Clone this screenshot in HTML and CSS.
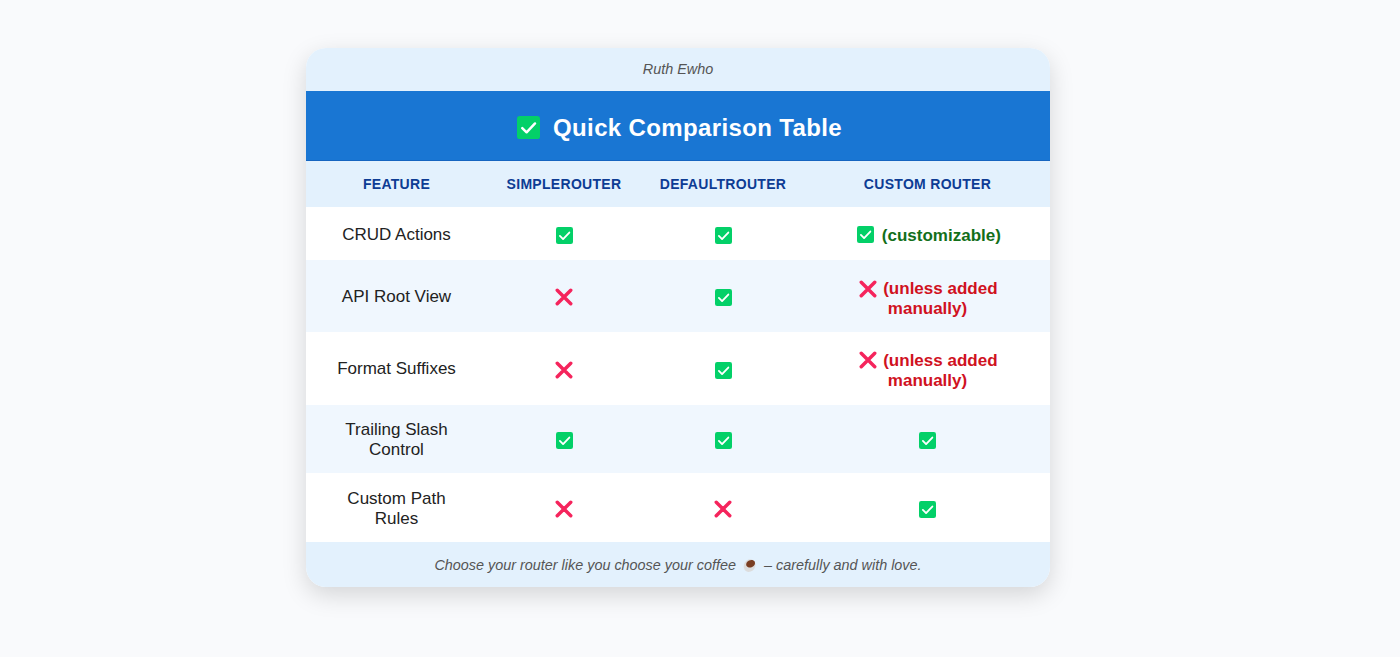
FILE: index.html
```html
<!DOCTYPE html>
<html lang="en">
<head>
<meta charset="utf-8">
<title>Quick Comparison Table</title>
<link rel="stylesheet" href="styles.css">
</head>
<body>
<svg class="defs" width="0" height="0" aria-hidden="true">
  <symbol id="yes" viewBox="0 0 24 24">
    <rect x="0" y="0" width="24" height="24" rx="3" fill="#03d068"/>
    <path d="M5.5 12.6 L10 17 L18.8 7.8" fill="none" stroke="#fff" stroke-width="2.6" stroke-linecap="round" stroke-linejoin="round"/>
  </symbol>
  <symbol id="no" viewBox="0 0 24 24">
    <path d="M3 3 L21 21 M21 3 L3 21" fill="none" stroke="#f5245c" stroke-width="4.6" stroke-linecap="round"/>
  </symbol>
</svg>
<main class="card">
  <div class="byline">Ruth Ewho</div>
  <h1 class="title"><svg class="icon-title"><use href="#yes"/></svg><span>Quick Comparison Table</span></h1>
  <table class="grid">
    <colgroup><col class="c1"><col class="c2"><col class="c3"><col class="c4"></colgroup>
    <thead>
      <tr><th>FEATURE</th><th>SIMPLEROUTER</th><th>DEFAULTROUTER</th><th>CUSTOM ROUTER</th></tr>
    </thead>
    <tbody>
      <tr class="r1">
        <td class="name">CRUD Actions</td>
        <td><svg class="icon"><use href="#yes"/></svg></td>
        <td><svg class="icon"><use href="#yes"/></svg></td>
        <td class="good"><svg class="icon"><use href="#yes"/></svg> (customizable)</td>
      </tr>
      <tr class="r2 alt">
        <td class="name">API Root View</td>
        <td><svg class="icon x"><use href="#no"/></svg></td>
        <td><svg class="icon"><use href="#yes"/></svg></td>
        <td class="bad"><svg class="icon x"><use href="#no"/></svg> (unless added manually)</td>
      </tr>
      <tr class="r3">
        <td class="name">Format Suffixes</td>
        <td><svg class="icon x"><use href="#no"/></svg></td>
        <td><svg class="icon"><use href="#yes"/></svg></td>
        <td class="bad"><svg class="icon x"><use href="#no"/></svg> (unless added manually)</td>
      </tr>
      <tr class="r4 alt">
        <td class="name">Trailing Slash Control</td>
        <td><svg class="icon"><use href="#yes"/></svg></td>
        <td><svg class="icon"><use href="#yes"/></svg></td>
        <td><svg class="icon"><use href="#yes"/></svg></td>
      </tr>
      <tr class="r5">
        <td class="name">Custom Path Rules</td>
        <td><svg class="icon x"><use href="#no"/></svg></td>
        <td><svg class="icon x"><use href="#no"/></svg></td>
        <td><svg class="icon"><use href="#yes"/></svg></td>
      </tr>
    </tbody>
  </table>
  <footer class="note">Choose your router like you choose your coffee <svg class="coffee" viewBox="0 0 16 16"><ellipse cx="7.6" cy="8.6" rx="5.6" ry="6.6" transform="rotate(30 7.6 8.6)" fill="#dcdcdc"/><ellipse cx="8.6" cy="6.8" rx="4.6" ry="3.6" transform="rotate(-25 8.6 6.8)" fill="#7a3e22"/></svg> – carefully and with love.</footer>
</main>
</body>
</html>
```
FILE: styles.css
```css
* { box-sizing: border-box; }
html, body { margin: 0; height: 100%; }
body {
  background: #f9fafc;
  font-family: "Liberation Sans", Arial, sans-serif;
  padding-top: 48px;
}
.defs { display: block; height: 0; }
.card {
  width: 744px;
  height: 539px;
  margin: 0 0 0 306px;
  border-radius: 20px;
  overflow: hidden;
  background: #fff;
  box-shadow: 0 8px 24px rgba(0, 0, 0, 0.15);
}
.byline {
  height: 43px;
  padding-bottom: 2px;
  background: #e3f1fd;
  color: #555;
  font-size: 14.4px;
  font-style: italic;
  display: flex;
  align-items: center;
  justify-content: center;
}
.title {
  margin: 0;
  height: 70px;
  padding: 4px 0 0 3px;
  background: #1976d3;
  border-bottom: 1px solid #1565c0;
  color: #fff;
  font-size: 24px;
  font-weight: 700;
  letter-spacing: 0.36px;
  display: flex;
  align-items: center;
  justify-content: center;
  gap: 13px;
}
.icon-title { width: 23px; height: 23px; margin-top: -1px; }
.grid {
  width: 744px;
  table-layout: fixed;
  border-collapse: collapse;
}
.c1 { width: 181px; }
.c2 { width: 154px; }
.c3 { width: 164px; }
.c4 { width: 245px; }
th {
  height: 46px;
  padding: 0 8px;
  background: #e3f1fd;
  color: #0d3c94;
  font-size: 14px;
  font-weight: 700;
  letter-spacing: 0.3px;
  text-align: center;
}
td {
  padding: 0 40px;
  text-align: center;
  font-size: 16px;
  line-height: 20px;
  color: #222;
}
td:nth-child(2), td:nth-child(3) { padding: 0 8px; }
td.name { padding: 2px 30px 0; font-size: 17px; }
.r3 td.name { padding-top: 0; }
.r1 td { height: 53px; }
.r2 td { height: 72px; }
.r3 td { height: 73px; }
.r4 td { height: 68px; }
.r5 td { height: 69px; }
.alt td { background: #f0f7fe; }
.icon { width: 17px; height: 17px; vertical-align: -5px; }
.icon.x { width: 18px; height: 18px; vertical-align: -5px; }
.good, .bad { font-weight: 700; font-size: 17px; }
.good { color: #136f1a; padding-top: 5px; }
.bad { color: #d0121f; }
.good .icon { margin-right: 3px; margin-left: 3px; vertical-align: -2px; }
.bad .icon.x { margin: 0 1px 0 2px; vertical-align: -3.5px; }
.r2 .bad { padding-top: 6px; }
.r3 .bad { padding-top: 4px; }
.note {
  height: 45px;
  background: #e3f1fd;
  color: #555;
  font-size: 14.4px;
  font-style: italic;
  display: flex;
  align-items: center;
  justify-content: center;
  white-space: pre-wrap;
}
.coffee { width: 16px; height: 16px; margin: 0 2px; }
```
